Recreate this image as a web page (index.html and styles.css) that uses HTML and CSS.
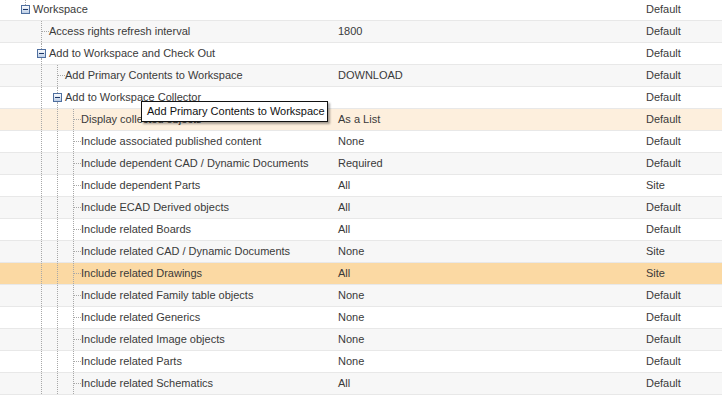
FILE: index.html
```html
<!DOCTYPE html>
<html>
<head>
<meta charset="utf-8">
<link rel="stylesheet" href="styles.css">
</head>
<body>
<div class="grid">
  <div class="row">
    <div class="name"><span class="slot node-end"><svg class="box" width="9" height="9" viewBox="0 0 9 9"><defs><linearGradient id="g0" x1="0" y1="0" x2="0" y2="1"><stop offset="0" stop-color="#ffffff"/><stop offset="1" stop-color="#b9cbe4"/></linearGradient></defs><rect x="0.5" y="0.5" width="8" height="8" fill="url(#g0)" stroke="#4f6f9f"/><rect x="2" y="4" width="5" height="1" fill="#1c3768"/></svg></span><span class="label">Workspace</span></div>
    <div class="val"></div><div class="src">Default</div>
  </div>
  <div class="row alt">
    <div class="name"><span class="slot"></span><span class="slot leaf"></span><span class="label">Access rights refresh interval</span></div>
    <div class="val">1800</div><div class="src">Default</div>
  </div>
  <div class="row">
    <div class="name"><span class="slot"></span><span class="slot node"><svg class="box" width="9" height="9" viewBox="0 0 9 9"><rect x="0.5" y="0.5" width="8" height="8" fill="url(#g0)" stroke="#4f6f9f"/><rect x="2" y="4" width="5" height="1" fill="#1c3768"/></svg></span><span class="label">Add to Workspace and Check Out</span></div>
    <div class="val"></div><div class="src">Default</div>
  </div>
  <div class="row alt">
    <div class="name"><span class="slot"></span><span class="slot line"></span><span class="slot leaf"></span><span class="label">Add Primary Contents to Workspace</span></div>
    <div class="val">DOWNLOAD</div><div class="src">Default</div>
  </div>
  <div class="row">
    <div class="name"><span class="slot"></span><span class="slot line"></span><span class="slot node"><svg class="box" width="9" height="9" viewBox="0 0 9 9"><rect x="0.5" y="0.5" width="8" height="8" fill="url(#g0)" stroke="#4f6f9f"/><rect x="2" y="4" width="5" height="1" fill="#1c3768"/></svg></span><span class="label">Add to Workspace Collector</span></div>
    <div class="val"></div><div class="src">Default</div>
  </div>
  <div class="row hover">
    <div class="name"><span class="slot"></span><span class="slot line"></span><span class="slot line"></span><span class="slot leaf"></span><span class="label">Display collected objects</span></div>
    <div class="val">As a List</div><div class="src">Default</div>
  </div>
  <div class="row">
    <div class="name"><span class="slot"></span><span class="slot line"></span><span class="slot line"></span><span class="slot leaf"></span><span class="label">Include associated published content</span></div>
    <div class="val">None</div><div class="src">Default</div>
  </div>
  <div class="row alt">
    <div class="name"><span class="slot"></span><span class="slot line"></span><span class="slot line"></span><span class="slot leaf"></span><span class="label">Include dependent CAD / Dynamic Documents</span></div>
    <div class="val">Required</div><div class="src">Default</div>
  </div>
  <div class="row">
    <div class="name"><span class="slot"></span><span class="slot line"></span><span class="slot line"></span><span class="slot leaf"></span><span class="label">Include dependent Parts</span></div>
    <div class="val">All</div><div class="src">Site</div>
  </div>
  <div class="row alt">
    <div class="name"><span class="slot"></span><span class="slot line"></span><span class="slot line"></span><span class="slot leaf"></span><span class="label">Include ECAD Derived objects</span></div>
    <div class="val">All</div><div class="src">Default</div>
  </div>
  <div class="row">
    <div class="name"><span class="slot"></span><span class="slot line"></span><span class="slot line"></span><span class="slot leaf"></span><span class="label">Include related Boards</span></div>
    <div class="val">All</div><div class="src">Default</div>
  </div>
  <div class="row alt">
    <div class="name"><span class="slot"></span><span class="slot line"></span><span class="slot line"></span><span class="slot leaf"></span><span class="label">Include related CAD / Dynamic Documents</span></div>
    <div class="val">None</div><div class="src">Site</div>
  </div>
  <div class="row selected">
    <div class="name"><span class="slot"></span><span class="slot line"></span><span class="slot line"></span><span class="slot leaf"></span><span class="label">Include related Drawings</span></div>
    <div class="val">All</div><div class="src">Site</div>
  </div>
  <div class="row alt">
    <div class="name"><span class="slot"></span><span class="slot line"></span><span class="slot line"></span><span class="slot leaf"></span><span class="label">Include related Family table objects</span></div>
    <div class="val">None</div><div class="src">Default</div>
  </div>
  <div class="row">
    <div class="name"><span class="slot"></span><span class="slot line"></span><span class="slot line"></span><span class="slot leaf"></span><span class="label">Include related Generics</span></div>
    <div class="val">None</div><div class="src">Default</div>
  </div>
  <div class="row alt">
    <div class="name"><span class="slot"></span><span class="slot line"></span><span class="slot line"></span><span class="slot leaf"></span><span class="label">Include related Image objects</span></div>
    <div class="val">None</div><div class="src">Default</div>
  </div>
  <div class="row">
    <div class="name"><span class="slot"></span><span class="slot line"></span><span class="slot line"></span><span class="slot leaf"></span><span class="label">Include related Parts</span></div>
    <div class="val">None</div><div class="src">Default</div>
  </div>
  <div class="row alt">
    <div class="name"><span class="slot"></span><span class="slot line"></span><span class="slot line"></span><span class="slot leaf"></span><span class="label">Include related Schematics</span></div>
    <div class="val">All</div><div class="src">Default</div>
  </div>
</div>
<div class="tooltip">Add Primary Contents to Workspace</div>
</body>
</html>
```
FILE: styles.css
```css
html, body {
  margin: 0;
  padding: 0;
  background: #ffffff;
  overflow: hidden;
}
body {
  font-family: "Liberation Sans", Arial, sans-serif;
  font-size: 11px;
  color: #3a3a3a;
  position: relative;
  width: 722px;
  height: 396px;
}
.grid {
  margin-top: -1px;
}
.row {
  display: grid;
  grid-template-columns: 334px 308px 1fr;
  height: 21px;
  border-bottom: 1px solid #e8e8e8;
  background: #ffffff;
}
.row.alt { background: #f7f7f7; }
.row.hover { background: #fdefdd; }
.row.selected { background: #fbd9a3; }
.name {
  display: flex;
  padding-left: 17px;
  height: 21px;
  line-height: 21px;
  white-space: nowrap;
}
.val, .src {
  padding-left: 4px;
  line-height: 21px;
  white-space: nowrap;
}
.slot {
  position: relative;
  width: 16px;
  height: 21px;
  flex: none;
}
.slot.line::before,
.slot.leaf::before {
  content: "";
  position: absolute;
  left: 8px;
  top: 0;
  bottom: 0;
  border-left: 1px dotted #a8a8a8;
}
.slot.leaf::after {
  content: "";
  position: absolute;
  left: 9px;
  top: 10px;
  width: 7px;
  border-top: 1px dotted #a8a8a8;
}
.slot.node::before,
.slot.node-end::before {
  content: "";
  position: absolute;
  left: 8px;
  top: 0;
  height: 6px;
  border-left: 1px dotted #a8a8a8;
}
.slot.node::after {
  content: "";
  position: absolute;
  left: 8px;
  top: 15px;
  bottom: 0;
  border-left: 1px dotted #a8a8a8;
}
.box {
  position: absolute;
  left: 4px;
  top: 6px;
  display: block;
}
.label {
  padding-left: 0;
}
.tooltip {
  position: absolute;
  left: 141px;
  top: 101px;
  width: 176px;
  height: 19px;
  line-height: 19px;
  padding: 0 4px 0 5px;
  background: #ffffff;
  border: 1px solid #111111;
  color: #111111;
  box-shadow: 2px 2px 2px rgba(0, 0, 0, 0.35);
  white-space: nowrap;
}
```
